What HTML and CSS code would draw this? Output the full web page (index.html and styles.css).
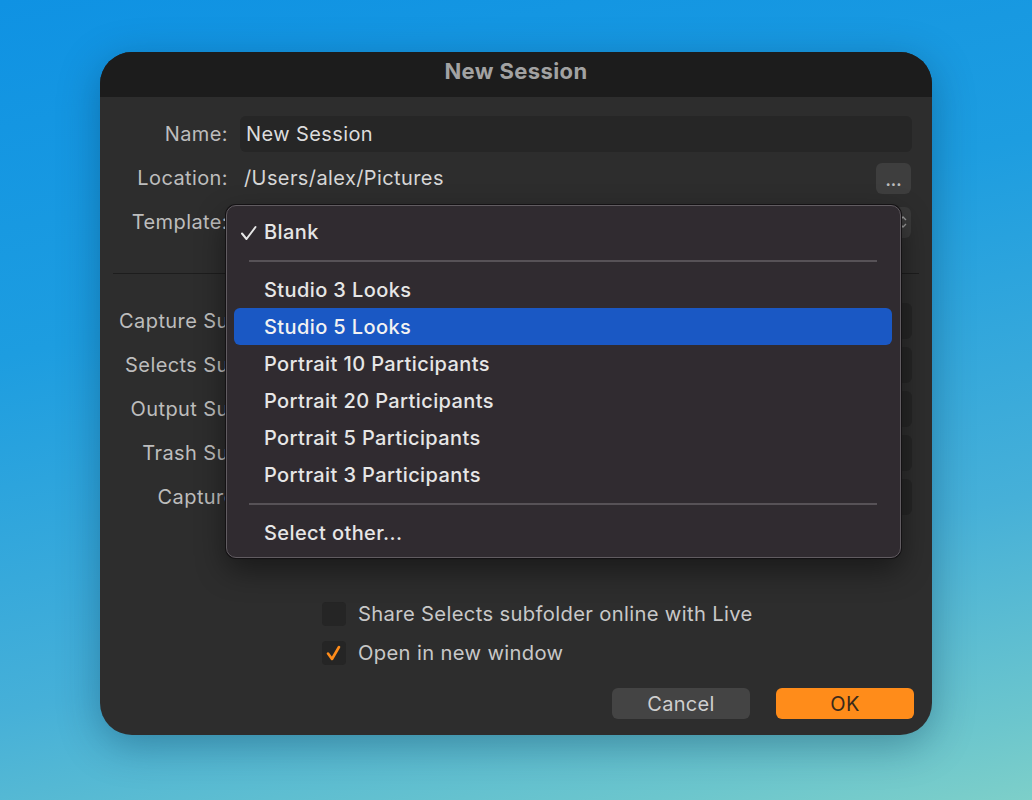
FILE: index.html
```html
<!DOCTYPE html>
<html>
  <head>
    <title>New Session</title>
    <link rel="stylesheet" href="styles.css">
  </head>
  <body>
    <div class="dialog">
      <div class="titlebar">New Session</div>

      <div class="rows top">
        <div class="label">Name:</div>
        <div class="field">New Session</div>

        <div class="label">Location:</div>
        <div class="path-row">
          <span class="path">/Users/alex/Pictures</span>
          <div class="more">...</div>
        </div>

        <div class="label">Template:</div>
        <div class="popup">
          <span>Blank</span>
          <svg class="arrows" width="8" height="16" viewBox="0 0 8 16">
            <polyline points="1,6 4,3 7,6" fill="none" stroke="#999" stroke-width="1.4"/>
            <polyline points="1,10 4,13 7,10" fill="none" stroke="#999" stroke-width="1.4"/>
          </svg>
        </div>
      </div>

      <div class="sep"></div>

      <div class="rows bottom">
        <div class="label">Capture Subfolder:</div>
        <div class="field"></div>
        <div class="label">Selects Subfolder:</div>
        <div class="field"></div>
        <div class="label">Output Subfolder:</div>
        <div class="field"></div>
        <div class="label">Trash Subfolder:</div>
        <div class="field"></div>
        <div class="label">Capture Name:</div>
        <div class="field"></div>
      </div>

      <div class="checks">
        <div class="check-row">
          <span class="box"></span>
          <span>Share Selects subfolder online with Live</span>
        </div>
        <div class="check-row">
          <span class="box">
            <svg width="24" height="24" viewBox="0 0 24 24">
              <polyline points="6,12.5 10,18 17,6" fill="none" stroke="#ff8c1a" stroke-width="2.6" stroke-linecap="round" stroke-linejoin="round"/>
            </svg>
          </span>
          <span>Open in new window</span>
        </div>
      </div>

      <div class="buttons">
        <div class="btn cancel">Cancel</div>
        <div class="btn ok">OK</div>
      </div>

      <div class="menu">
        <div class="item checked">
          <svg class="tick" width="18" height="16" viewBox="0 0 18 16">
            <polyline points="2,8.5 6.5,14 15.5,2" fill="none" stroke="#e6e6e6" stroke-width="2" stroke-linecap="round" stroke-linejoin="round"/>
          </svg>
          Blank
        </div>
        <div class="menu-sep"></div>
        <div class="item">Studio 3 Looks</div>
        <div class="item active">Studio 5 Looks</div>
        <div class="item">Portrait 10 Participants</div>
        <div class="item">Portrait 20 Participants</div>
        <div class="item">Portrait 5 Participants</div>
        <div class="item">Portrait 3 Participants</div>
        <div class="menu-sep"></div>
        <div class="item">Select other...</div>
      </div>
    </div>
  </body>
</html>
```

FILE: styles.css
```css
html, body {
  height: 100%;
}
body {
  margin: 0;
  background: linear-gradient(168deg, #0f92e3 0%, #1d9de0 35%, #46b0d8 70%, #6cc6cd 92%, #7dcfc9 100%);
  font-family: Inter, "Open Sans", sans-serif;
  overflow: hidden;
}
.dialog {
  position: relative;
  width: 832px;
  height: 683px;
  margin: 52px 0 0 100px;
  background-color: #2d2d2d;
  border-radius: 32px;
  box-shadow: 0 10px 40px rgba(0, 40, 70, 0.35);
  overflow: hidden;
}
.titlebar {
  height: 45px;
  line-height: 39px;
  background-color: #1c1c1c;
  color: #a2a2a2;
  font-size: 22px;
  font-weight: 700;
  text-align: center;
  letter-spacing: 0.4px;
}
.rows {
  display: grid;
  row-gap: 8px;
  column-gap: 12px;
  grid-auto-rows: 36px;
  padding-right: 20px;
}
.rows.top {
  grid-template-columns: 128px 1fr;
  margin-top: 19px;
}
.rows.bottom {
  grid-template-columns: 205px 1fr;
  margin-top: 29px;
}
.label {
  color: #bdbdbd;
  font-size: 20px;
  letter-spacing: 0.4px;
  text-align: right;
  align-self: center;
  white-space: nowrap;
}
.field {
  background-color: #262626;
  border-radius: 6px;
  color: #dcdcdc;
  font-size: 20px;
  letter-spacing: 0.4px;
  line-height: 36px;
  padding: 0 6px;
}
.path-row {
  display: flex;
  align-items: center;
  justify-content: space-between;
  padding-left: 4px;
  padding-right: 1px;
}
.path {
  color: #d6d6d6;
  font-size: 20px;
  letter-spacing: 0.4px;
}
.more {
  width: 35px;
  height: 31px;
  background-color: #3e3e3e;
  border-radius: 6px;
  color: #bbb;
  font-size: 16px;
  font-weight: 700;
  text-align: center;
  line-height: 34px;
}
.popup {
  display: flex;
  align-items: center;
  justify-content: space-between;
  height: 31px;
  align-self: center;
  margin-right: 1px;
  padding: 0 4px 0 8px;
  background-color: #3a3a3a;
  border-radius: 6px;
  color: #dcdcdc;
  font-size: 20px;
}
.sep {
  height: 1px;
  margin: 33px 13px 0 13px;
  background-color: #1d1d1d;
}
.checks {
  display: flex;
  flex-direction: column;
  gap: 15px;
  margin-top: 87px;
  padding-left: 222px;
}
.check-row {
  display: flex;
  align-items: center;
  gap: 12px;
  height: 24px;
  line-height: 24px;
  color: #c8c8c8;
  font-size: 20.2px;
  letter-spacing: 0.35px;
}
.box {
  width: 24px;
  height: 24px;
  background-color: #252525;
  border-radius: 4px;
}
.box svg {
  display: block;
}
.buttons {
  display: flex;
  justify-content: flex-end;
  gap: 26px;
  margin-top: 23px;
  padding-right: 18px;
}
.btn {
  width: 138px;
  height: 31px;
  border-radius: 6px;
  font-size: 20px;
  letter-spacing: 0.3px;
  line-height: 32px;
  text-align: center;
}
.cancel {
  background-color: #444444;
  color: #cfcfcf;
}
.ok {
  background-color: #ff8c1a;
  color: #3a2a1a;
}
.menu {
  position: absolute;
  left: 126px;
  top: 153px;
  width: 675px;
  height: 353px;
  padding-top: 8px;
  box-sizing: border-box;
  background-color: #302b30;
  border: 1px solid #615c61;
  border-radius: 10px;
  box-shadow: 0 0 0 1px #141214, 0 12px 30px rgba(0, 0, 0, 0.45);
}
.item {
  display: flex;
  align-items: center;
  height: 37px;
  margin: 0 8px 0 7px;
  padding-left: 30px;
  border-radius: 6px;
  color: #e6e6e6;
  font-size: 20px;
  font-weight: 500;
  letter-spacing: 0.4px;
  position: relative;
}
.item.checked {
  height: 36px;
}
.tick {
  position: absolute;
  left: 6px;
  top: 11px;
}
.item.active {
  background-color: #1a58c4;
  color: #f2f2f2;
}
.menu-sep {
  height: 2px;
  margin: 10px 23px 9px 22px;
  background-color: #575257;
}
```
